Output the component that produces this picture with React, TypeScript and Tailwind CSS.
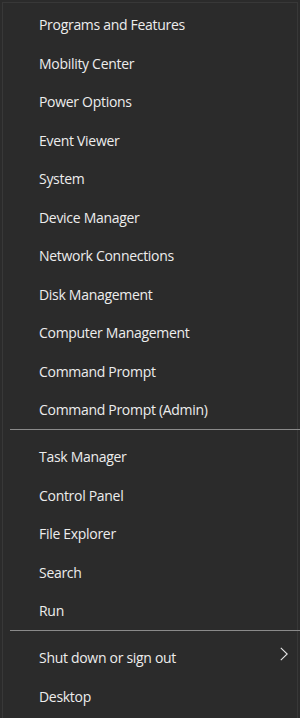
const groups: string[][] = [
  [
    'Programs and Features',
    'Mobility Center',
    'Power Options',
    'Event Viewer',
    'System',
    'Device Manager',
    'Network Connections',
    'Disk Management',
    'Computer Management',
    'Command Prompt',
    'Command Prompt (Admin)',
  ],
  ['Task Manager', 'Control Panel', 'File Explorer', 'Search', 'Run'],
  ['Shut down or sign out', 'Desktop'],
];

function MenuRow({ label, submenu }: { label: string; submenu?: boolean }) {
  return (
    <div className="flex h-[38.5px] items-center justify-between pl-[36px] pr-[9px] text-[14px] tracking-[-0.3px] text-[#ededed] hover:bg-[#3a3a3a]">
      <span>{label}</span>
      {submenu && (
        <svg width="8" height="14" viewBox="0 0 8 14" className="mb-[8px]" fill="none">
          <polyline points="0.8,0.8 7.2,7 0.8,13.2" stroke="#e6e6e6" strokeWidth="1.1" />
        </svg>
      )}
    </div>
  );
}

export default function App() {
  return (
    <div className="h-[718px] w-[300px] overflow-hidden bg-[#2b2b2b] px-[2px] pt-[2px] font-['Open_Sans',sans-serif]">
      <div className="h-full border-x border-t border-[#383838] pt-[2.6px]">
        {groups.map((group, gi) => (
          <div key={gi}>
            {gi > 0 && <div className="mb-[7.5px] ml-[7px] mr-[-3px] h-px bg-[#8a8a8a]" />}
            {group.map((label) => (
              <MenuRow key={label} label={label} submenu={label === 'Shut down or sign out'} />
            ))}
          </div>
        ))}
      </div>
    </div>
  );
}
